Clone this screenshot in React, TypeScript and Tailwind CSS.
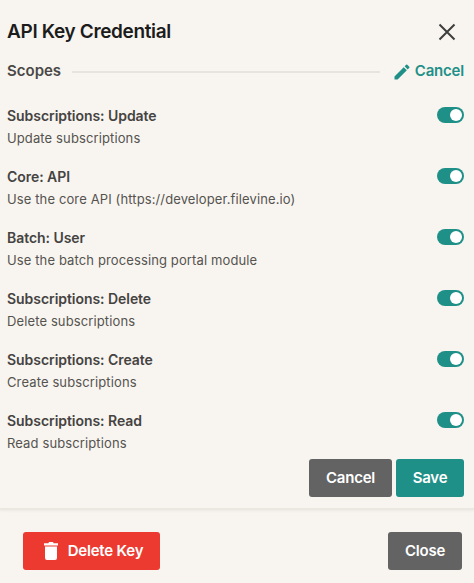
const scopes = [
  { name: "Subscriptions: Update", desc: "Update subscriptions" },
  { name: "Core: API", desc: "Use the core API (https://developer.filevine.io)" },
  { name: "Batch: User", desc: "Use the batch processing portal module" },
  { name: "Subscriptions: Delete", desc: "Delete subscriptions" },
  { name: "Subscriptions: Create", desc: "Create subscriptions" },
  { name: "Subscriptions: Read", desc: "Read subscriptions" },
]

function Toggle() {
  return (
    <span className="flex h-[16px] w-[27px] items-center justify-end rounded-full bg-[#1f9088] pr-[2px]">
      <span className="h-[12px] w-[12px] rounded-full bg-white"></span>
    </span>
  )
}

function App() {
  return (
    <div className="h-[583px] w-[474px] overflow-hidden bg-[#f8f5f0] font-['Inter',sans-serif]">
      <div className="flex h-[510px] flex-col border-b-2 border-[#ebe8e1] pl-[7px] pr-[10px] shadow-[0_1px_3px_rgba(0,0,0,0.05)]">
        <div className="flex h-[63px] items-center justify-between pt-[1px]">
          <h1 className="text-[19px] font-semibold tracking-[-0.35px] text-[#1c1c1c]">API Key Credential</h1>
          <svg width="20" height="20" viewBox="0 0 20 20" className="mr-[7px]" fill="none" stroke="#3f3f3f" strokeWidth="2">
            <path d="M2.5 2.5 17.5 17.5M17.5 2.5 2.5 17.5" />
          </svg>
        </div>
        <div className="flex h-[17px] items-center">
          <span className="text-[15px] font-semibold text-[#4a4846]">Scopes</span>
          <span className="ml-[11px] h-[2px] flex-1 bg-[#e6e4de]"></span>
          <svg width="20" height="20" viewBox="0 0 24 24" className="ml-[12px]" fill="#1f9088">
            <path d="M3 17.25V21h3.75L17.81 9.94l-3.75-3.75L3 17.25zM20.71 7.04a1 1 0 0 0 0-1.41l-2.34-2.34a1 1 0 0 0-1.41 0l-1.83 1.83 3.75 3.75 1.83-1.83z" />
          </svg>
          <span className="ml-[3px] text-[15px] font-semibold tracking-[-0.2px] text-[#1f9088]">Cancel</span>
        </div>
        <div className="mt-[18px] flex flex-col">
          {scopes.map((s) => (
            <div key={s.name} className="flex h-[61px] flex-col pt-[5px]">
              <div className="flex h-[24px] items-center justify-between">
                <span className="text-[14px] font-semibold tracking-[-0.05px] text-[#454341]">{s.name}</span>
                <Toggle />
              </div>
              <p className="mt-[2px] text-[13px] leading-[18px] tracking-[0.12px] text-[#55534f]">{s.desc}</p>
            </div>
          ))}
        </div>
        <div className="mt-[-5px] flex justify-end gap-[4px]">
          <button className="h-[38px] w-[83px] rounded-[3px] bg-[#636363] text-[15px] font-semibold tracking-[-0.2px] text-white">Cancel</button>
          <button className="h-[38px] w-[68px] rounded-[3px] bg-[#1f9088] text-[15px] font-semibold tracking-[-0.2px] text-white">Save</button>
        </div>
      </div>
      <div className="flex items-center justify-between pl-[23px] pr-[12px] pt-[22px]">
        <button className="flex h-[38px] w-[137px] items-center justify-center gap-[10px] rounded-[3px] bg-[#ec3a31] pl-[4px] text-[15px] font-semibold tracking-[-0.2px] text-white">
          <svg width="14" height="18" viewBox="0 0 14 18" fill="white">
            <path d="M5 0h4l.6 1.2H14v2.2H0V1.2h4.4L5 0zM1 4.6h12V16a2 2 0 0 1-2 2H3a2 2 0 0 1-2-2V4.6z" />
          </svg>
          Delete Key
        </button>
        <button className="h-[38px] w-[74px] rounded-[3px] bg-[#636363] text-[15px] font-semibold tracking-[-0.2px] text-white">Close</button>
      </div>
    </div>
  )
}

export default App
